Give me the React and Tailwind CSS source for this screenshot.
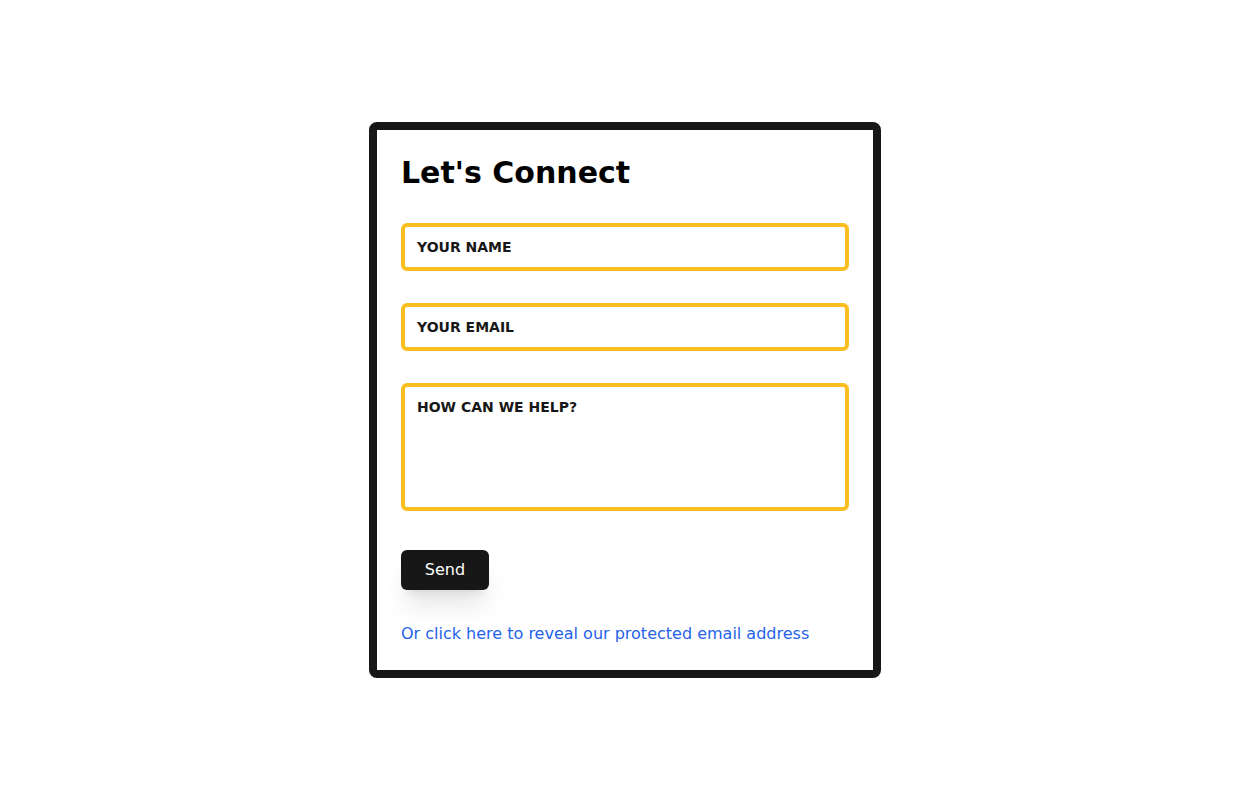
import React from 'react';

const fieldClass =
  "w-full rounded-md border-4 border-[#fbbf24] bg-white px-3 text-sm text-[#171717] outline-none placeholder:font-bold placeholder:uppercase placeholder:text-[#171717]";

export default function App() {
  return (
    <div className="min-h-screen flex items-center justify-center bg-white font-['DejaVu_Sans',sans-serif]">
      <div className="w-[512px] rounded-lg border-8 border-[#171717] bg-white px-6 pt-[25px] pb-6">
        <h1 className="text-3xl font-bold text-black mb-8">Let's Connect</h1>
        <form className="flex flex-col" onSubmit={(e) => e.preventDefault()}>
          <input type="text" placeholder="Your Name" className={fieldClass + " h-12"} />
          <input type="email" placeholder="Your Email" className={fieldClass + " h-12 mt-8"} />
          <textarea placeholder="How can we help?" className={fieldClass + " block h-32 mt-8 pt-[10px] pb-3 resize-none"} />
          <div className="mt-[39px]">
            <button type="submit" className="h-10 w-[88px] rounded-md bg-[#171717] text-base text-white shadow-xl">
              Send
            </button>
          </div>
        </form>
        <a href="#" className="block mt-8 text-base leading-6 text-[#2563eb]">
          Or click here to reveal our protected email address
        </a>
      </div>
    </div>
  );
}
